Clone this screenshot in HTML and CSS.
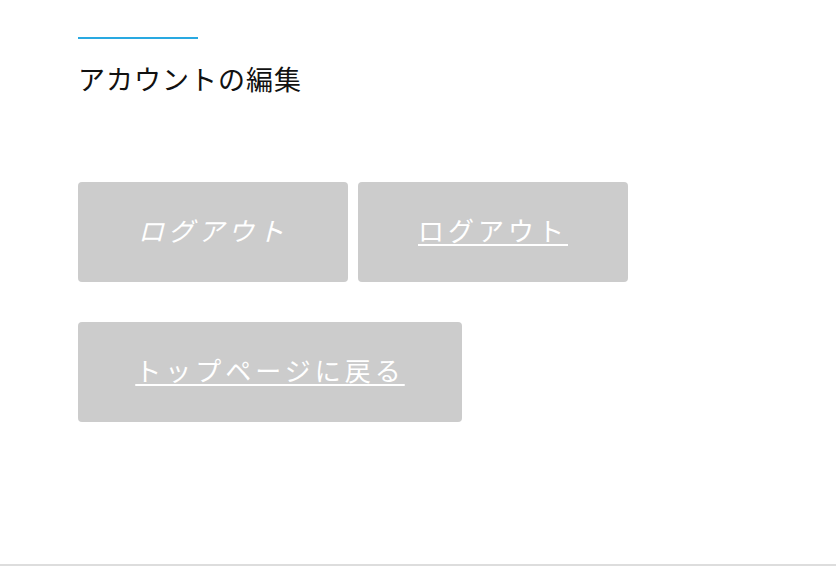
FILE: index.html
```html
<!DOCTYPE html>
<html lang="ja">
<head>
    <meta charset="UTF-8">
    <meta name="viewport" content="width=device-width, initial-scale=1.0">
    <title>アカウントの編集</title>
    <link rel="stylesheet" href="styles.css">
</head>
<body>
    <div class="page">
        <main class="content">
            <!-- Page heading -->
            <div class="heading">
                <h1>アカウントの編集</h1>
            </div>

            <!-- Actions -->
            <div class="btn-row">
                <a class="btn btn-italic">ログアウト</a>
                <a class="btn btn-link" href="#">ログアウト</a>
            </div>
            <div class="btn-row">
                <a class="btn btn-link btn-wide" href="#">トップページに戻る</a>
            </div>
        </main>
        <footer class="footer"></footer>
    </div>
</body>
</html>
```

FILE: styles.css
```css
body {
    margin: 0;
    padding: 0;
    font-family: "Noto Sans CJK JP", "Noto Sans", sans-serif;
    background-color: #fff;
    color: #111;
}
.page {
    height: 570px;
    display: flex;
    flex-direction: column;
}
.content {
    flex: 1;
    padding: 37px 0 0 78px;
}
.heading {
    border-top: 2px solid #29a9e1;
    width: 120px;
    margin-bottom: 85px;
}
h1 {
    margin: 22px 0 0 0;
    font-size: 27px;
    font-weight: 400;
    letter-spacing: 1px;
    line-height: 36px;
    white-space: nowrap;
}
.btn-row {
    display: flex;
    gap: 10px;
    margin-bottom: 40px;
}
.btn {
    display: flex;
    align-items: center;
    justify-content: center;
    width: 270px;
    height: 100px;
    padding-bottom: 4px;
    box-sizing: border-box;
    background-color: #cccccc;
    border-radius: 4px;
    color: #fff;
    font-size: 26px;
    letter-spacing: 4px;
    line-height: 1;
    text-decoration: none;
}
.btn-italic {
    font-style: italic;
}
.btn-link {
    text-decoration: underline;
    text-decoration-thickness: 2px;
    text-underline-offset: 3px;
}
.btn-wide {
    width: 384px;
}
.footer {
    height: 4px;
    border-top: 2px solid #dddddd;
}
```
